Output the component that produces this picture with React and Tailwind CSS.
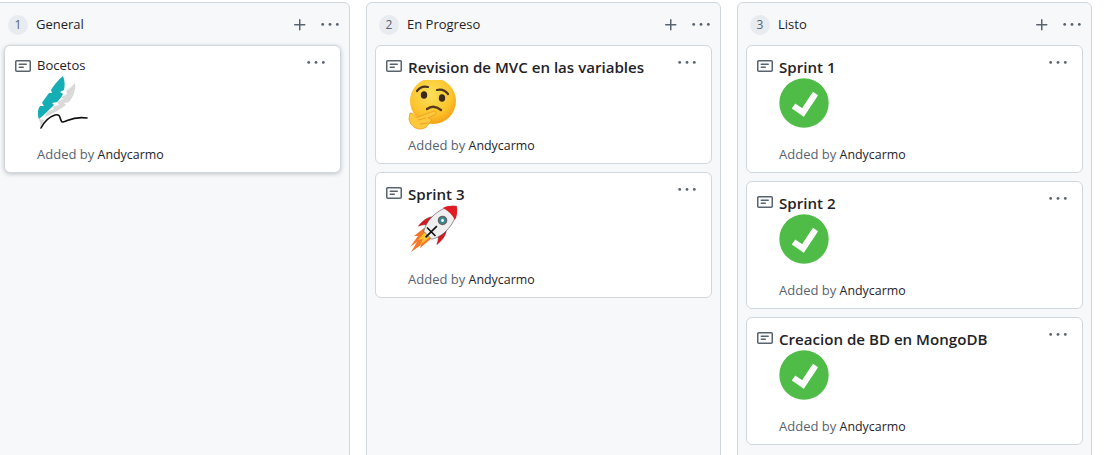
import React from "react";

const Note = () => (
  <svg width="16" height="16" viewBox="0 0 16 16" fill="#59636e" className="shrink-0">
    <path d="M0 3.75C0 2.784.784 2 1.75 2h12.5c.966 0 1.75.784 1.75 1.75v8.5A1.75 1.75 0 0 1 14.25 14H1.75A1.75 1.75 0 0 1 0 12.25Zm1.75-.25a.25.25 0 0 0-.25.25v8.5c0 .138.112.25.25.25h12.5a.25.25 0 0 0 .25-.25v-8.5a.25.25 0 0 0-.25-.25ZM3.5 6.25a.75.75 0 0 1 .75-.75h7a.75.75 0 0 1 0 1.5h-7a.75.75 0 0 1-.75-.75Zm.75 2.25h4a.75.75 0 0 1 0 1.5h-4a.75.75 0 0 1 0-1.5Z" />
  </svg>
);
const Kebab = () => (
  <svg width="18" height="18" viewBox="0 0 16 16" fill="#59636e">
    <circle cx="1.5" cy="7.5" r="1.25" />
    <circle cx="8" cy="7.5" r="1.25" />
    <circle cx="14.5" cy="7.5" r="1.25" />
  </svg>
);
const Plus = () => (
  <svg width="16" height="16" viewBox="0 0 16 16" fill="#59636e">
    <path d="M7.75 2a.75.75 0 0 1 .75.75V7h4.25a.75.75 0 0 1 0 1.5H8.5v4.25a.75.75 0 0 1-1.5 0V8.5H2.75a.75.75 0 0 1 0-1.5H7V2.75A.75.75 0 0 1 7.75 2Z" />
  </svg>
);

const Feather = () => (
  <svg width="52" height="56" viewBox="0 0 52 56">
    <path d="M38 8C39 14 37 21 32 27L27 28L29 30C23 35 15 39 8 42L10 37L17 34L15 32L22 30L20 27L26 24L25 22L30 19L29 16L33 13Z" fill="#d9d9d9" />
    <path d="M26 1C28 6 28 11 27 15L23 17L26 19C24 23 22 25 20 27L15 28L17 30C13 34 7 40 2 44C0 39 1 34 3 31L7 31L5 28C7 24 10 21 12 18L15 18L14 15C17 10 21 5 26 1Z" fill="#14aeb4" />
    <path d="M2 44C3 47 4 49 3 54L7 45Z" fill="#d8d8d8" />
    <path d="M4 53C7 47 12 42 18 40C25 38 22 47 26 47C31 46 36 41 50 43" fill="none" stroke="#111" strokeWidth="1.6" strokeLinecap="round" />
  </svg>
);

const Thinking = () => (
  <svg width="52" height="52" viewBox="0 0 52 52">
    <defs>
      <radialGradient id="tf" cx="45%" cy="35%" r="70%">
        <stop offset="0%" stopColor="#fde15a" />
        <stop offset="65%" stopColor="#fbc42c" />
        <stop offset="100%" stopColor="#f29a12" />
      </radialGradient>
    </defs>
    <circle cx="26" cy="21" r="23" fill="url(#tf)" />
    <path d="M10 11C13 7 17 6 21 7" fill="none" stroke="#4a3320" strokeWidth="2.2" strokeLinecap="round" />
    <path d="M30 10C34 9 38 10 41 14" fill="none" stroke="#4a3320" strokeWidth="2.2" strokeLinecap="round" />
    <ellipse cx="17" cy="15" rx="3.2" ry="3.8" fill="#3a2a1c" />
    <ellipse cx="35" cy="18" rx="3.2" ry="3.8" fill="#3a2a1c" />
    <path d="M20 29C24 26 29 26 34 30" fill="none" stroke="#5a3a1a" strokeWidth="2.4" strokeLinecap="round" />
    <path d="M3 33C6 33 8 35 9 38C14 36 21 33 27 31C30 31 30 34 27 35L21 38C25 38 25 42 22 43C21 46 18 49 13 49C8 49 3 45 2 39Z" fill="#fcc93c" stroke="#ef9a1a" strokeWidth="0.8" />
    <path d="M11 40L19 38M13 44L21 43" fill="none" stroke="#ee9f20" strokeWidth="1" />
  </svg>
);

const Rocket = () => (
  <svg width="52" height="50" viewBox="0 0 52 50">
    <path d="M16 25L6 33L10 33L2 44L9 39L3 49L13 42L12 45L24 35Z" fill="#f4772a" />
    <path d="M18 28L10 37L15 36L12 42L22 34Z" fill="#fbc531" />
    <g transform="translate(31 21) rotate(45)">
      <path d="M-7 -3C-13 1 -14 9 -13 16C-11 11 -8 9 -6 8Z" fill="#d71920" stroke="#8d1015" strokeWidth="0.5" />
      <path d="M7 -3C13 1 14 9 13 16C11 11 8 9 6 8Z" fill="#d71920" stroke="#8d1015" strokeWidth="0.5" />
      <path d="M0 -25C8 -18 10 -8 10 0C10 7 8 12 5.5 16H-5.5C-8 12 -10 7 -10 0C-10 -8 -8 -18 0 -25Z" fill="#efefef" stroke="#555" strokeWidth="0.6" />
      <path d="M0 -25C4.5 -22 7.5 -18 8.5 -14C3 -16 -3 -16 -8.5 -14C-7.5 -18 -4.5 -22 0 -25Z" fill="#e01b22" />
      <circle cx="0" cy="-5" r="4" fill="#2e8f99" stroke="#666" strokeWidth="1.6" />
      <circle cx="0" cy="-5" r="1.5" fill="#f3f3f3" />
      <path d="M0 3V19M-6 11H6" stroke="#111" strokeWidth="1.6" />
    </g>
  </svg>
);

const Check = () => (
  <svg width="50" height="50" viewBox="0 0 50 50">
    <circle cx="25" cy="25" r="24.7" fill="#50bc48" />
    <path d="M14.5 28L24 34.5L36.5 15.5" fill="none" stroke="#fff" strokeWidth="6.2" />
  </svg>
);

const Card = ({ title, small, imgH, imgClass, shadow, img }) => (
  <div
    className={`relative flex rounded-md border border-[#d0d7de] bg-white pl-[10px] pt-[11px] ${
      shadow ? "shadow-[0_1px_4px_rgba(31,35,40,0.25)]" : ""
    }`}
  >
    <div className="mr-[6px] mt-[1px]">
      <Note />
    </div>
    <div className="min-w-0 flex-1">
      {small ? (
        <div className="h-[21px] text-[13px] leading-[17px] text-[#1f2328]">{title}</div>
      ) : (
        <div className="h-[21px] text-[15.1px] font-semibold leading-[21px] text-[#1f2328]">{title}</div>
      )}
      <div className={imgClass} style={{ height: imgH }}>
        {img}
      </div>
      <div className="h-[26px] text-[13px] leading-[17px] text-[#59636e]">
        Added by <span className="text-[12.4px] text-[#1f2328]">Andycarmo</span>
      </div>
    </div>
    <div className="absolute right-[15px] top-[8px]">
      <Kebab />
    </div>
  </div>
);

const Column = ({ n, name, first, children }) => (
  <section
    className={`flex h-[460px] w-[355px] shrink-0 flex-col rounded-md border border-[#d0d7de] bg-[#f6f8fa] px-[8px] ${
      first ? "ml-[-5px]" : ""
    }`}
  >
    <header className="flex h-[42px] items-center pl-[4px] pr-[2px] pt-[2px]">
      <span className="flex h-[20px] w-[20px] items-center justify-center rounded-full bg-[#e8ebef] text-[12px] text-[#59636e]">
        {n}
      </span>
      <h2 className="ml-[8px] flex-1 text-[13px] font-normal text-[#1f2328]">{name}</h2>
      <Plus />
      <span className="ml-[13px]">
        <Kebab />
      </span>
    </header>
    <div className="flex flex-col gap-[8px]">{children}</div>
  </section>
);

export default function App() {
  return (
    <div
      className="flex h-[455px] w-[1106px] gap-[16px] overflow-hidden bg-white pt-[2px]"
      style={{ fontFamily: '"Open Sans", "Noto Sans", sans-serif' }}
    >
      <Column n="1" name="General" first>
        <Card title="Bocetos" small shadow imgH={71} imgClass="mt-[-3px]" img={<Feather />} />
      </Column>
      <Column n="2" name="En Progreso">
        <Card title="Revision de MVC en las variables" imgH={57} imgClass="-ml-[1px] mt-[2px]" img={<Thinking />} />
        <Card title="Sprint 3" imgH={68} imgClass="mt-[-2px]" img={<Rocket />} />
      </Column>
      <Column n="3" name="Listo">
        <Card title="Sprint 1" imgH={68} img={<Check />} />
        <Card title="Sprint 2" imgH={68} img={<Check />} />
        <Card title="Creacion de BD en MongoDB" imgH={68} img={<Check />} />
      </Column>
    </div>
  );
}
